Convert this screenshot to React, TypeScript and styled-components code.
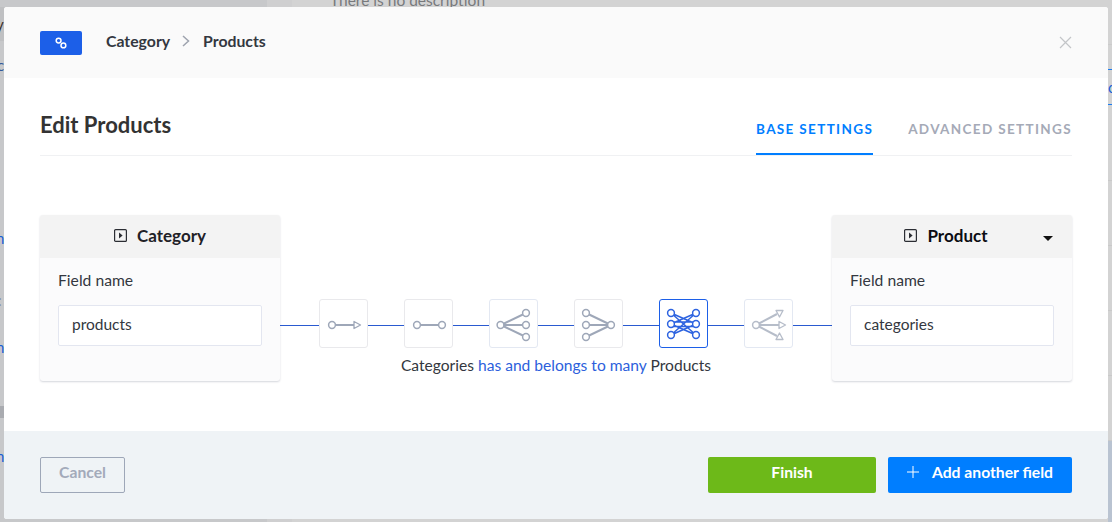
import React from "react";
import styled, { createGlobalStyle } from "styled-components";

const Global = createGlobalStyle`
  html, body { margin: 0; padding: 0; height: 100%; overflow: hidden; }
  body { font-family: Lato, "Noto Sans", sans-serif; color: #333740; }
  * { box-sizing: border-box; }
`;

const Page = styled.div`
  position: relative;
  width: 1112px;
  height: 522px;
  overflow: hidden;
  display: flex;
  background: #d3d3d3;
`;

const Sidebar = styled.div`
  width: 267px;
  flex: none;
  background: #c7c8ca;
  display: flex;
  flex-direction: column;
  overflow: hidden;
`;

const SideRow = styled.div<{ $h: number; $color?: string; $bg?: string; $indent?: number }>`
  height: ${(p) => p.$h}px;
  flex: none;
  font-size: 15px;
  line-height: ${(p) => p.$h}px;
  white-space: nowrap;
  color: ${(p) => p.$color || "#1b5fd6"};
  background: ${(p) => p.$bg || "transparent"};
  text-indent: ${(p) => p.$indent ?? -4}px;
`;

const Gutter = styled.div`
  width: 25px;
  flex: none;
  background: #cfcfd0;
`;

const Main = styled.div`
  flex: 1;
  padding-left: 38px;
  font-size: 15.5px;
  line-height: 18px;
  color: #77797c;
  margin-top: -9px;
`;

const Edge = styled.div`
  width: 4px;
  flex: none;
  display: flex;
  flex-direction: column;
  overflow: hidden;
`;

const EdgeRow = styled.div<{ $h: number; $border?: string; $bg?: string }>`
  height: ${(p) => p.$h}px;
  flex: none;
  border-bottom: 1px solid ${(p) => p.$border || "#c9c9c9"};
  background: ${(p) => p.$bg || "transparent"};
  color: #1b5fd6;
  font-size: 15px;
  line-height: ${(p) => p.$h}px;
  white-space: nowrap;
`;

const Modal = styled.div`
  position: absolute;
  left: 4px;
  top: 7px;
  width: 1104px;
  height: 512px;
  background: #fff;
  border-radius: 3px;
  overflow: hidden;
  display: flex;
  flex-direction: column;
`;

const Header = styled.header`
  height: 71px;
  flex: none;
  background: #fafafa;
  display: flex;
  align-items: center;
  padding: 0 36px;
`;

const Badge = styled.div`
  width: 42px;
  height: 24px;
  background: #1c5fe8;
  border-radius: 2px;
  display: flex;
  align-items: center;
  justify-content: center;
  margin-right: 24px;
`;

const Crumb = styled.span`
  font-size: 15.8px;
  font-weight: 700;
  color: #333740;
  padding-bottom: 5px;
`;

const CrumbArrow = styled.svg`
  width: 8px;
  height: 12px;
  margin: 0 13px 4px 12px;
`;

const CloseBtn = styled.button`
  margin-left: auto;
  width: 13px;
  height: 13px;
  padding: 0;
  border: 0;
  background: none;
  display: flex;
`;

const Body = styled.main`
  flex: 1;
  padding: 0 36px;
`;

const TitleRow = styled.div`
  height: 78px;
  display: flex;
  align-items: flex-end;
  border-bottom: 1px solid #f0f1f3;
`;

const Title = styled.h2`
  margin: 0 auto 0 0;
  align-self: flex-start;
  padding-top: 32px;
  font-size: 22px;
  line-height: 30px;
  font-weight: 700;
  color: #333333;
`;

const Tab = styled.div<{ $active?: boolean }>`
  height: 37px;
  margin-left: ${(p) => (p.$active ? "0" : "36px")};
  margin-right: ${(p) => (p.$active ? "-1px" : "0")};
  font-size: 13.5px;
  line-height: 22px;
  font-weight: 700;
  letter-spacing: 1.35px;
  color: ${(p) => (p.$active ? "#007eff" : "#a5aab7")};
  border-bottom: 2px solid ${(p) => (p.$active ? "#007eff" : "transparent")};
`;

const Relation = styled.div`
  display: flex;
  margin-top: 59px;
`;

const Card = styled.section`
  width: 240px;
  height: 166px;
  flex: none;
  background: #fbfbfc;
  border-radius: 3px;
  box-shadow: 0 1px 2px rgba(40, 50, 80, 0.2);
  overflow: hidden;
`;

const CardHead = styled.div<{ $caret?: boolean }>`
  position: relative;
  height: 43px;
  background: #f3f3f3;
  display: flex;
  align-items: center;
  justify-content: center;
  gap: 10px;
  font-size: 17px;
  font-weight: 700;
  color: ${(p) => (p.$caret ? "#0b0c12" : "#1f2127")};
  padding-right: ${(p) => (p.$caret ? "12px" : "0")};
  padding-bottom: 2px;
`;

const Caret = styled.svg`
  position: absolute;
  right: 19px;
  top: 21px;
  width: 10px;
  height: 5px;
`;

const CardBody = styled.div`
  padding: 11px 18px 0;
`;

const FieldLabel = styled.label`
  display: block;
  font-size: 15.7px;
  line-height: 22px;
  color: #333740;
  margin-bottom: 14px;
`;

const FieldInput = styled.input`
  display: block;
  width: 204px;
  height: 41px;
  border: 1px solid #e3e6f0;
  border-radius: 2px;
  background: #fff;
  padding: 0 13px 3px;
  font: 400 15.5px Lato, sans-serif;
  color: #333740;
  outline: none;
`;

const Center = styled.div`
  flex: 1;
  display: flex;
  flex-direction: column;
  padding-top: 84px;
`;

const Connectors = styled.div`
  display: flex;
  align-items: flex-start;
`;

const Wire = styled.div<{ $outer?: boolean }>`
  flex: ${(p) => (p.$outer ? "1" : "none")};
  width: ${(p) => (p.$outer ? "auto" : "36px")};
  height: 1px;
  margin-top: 26px;
  background: #2a5ad0;
`;

const NatureBtn = styled.div<{ $active?: boolean; $faded?: boolean }>`
  width: 49px;
  height: 49px;
  flex: none;
  border: 1px solid ${(p) => (p.$active ? "#1c5fe8" : p.$faded ? "#e3e8f2" : "#e9e9ec")};
  border-radius: 3px;
  background: #fff;
  display: flex;
`;

const Caption = styled.p`
  margin: 7px 0 0;
  text-align: center;
  font-size: 15.6px;
  line-height: 20px;
  color: #333740;
`;

const CaptionLink = styled.span`
  color: #2d5fdc;
`;

const Footer = styled.footer`
  height: 88px;
  flex: none;
  background: #eff3f6;
  padding: 26px 36px 0;
  display: flex;
  align-items: flex-start;
`;

const Button = styled.button<{ $w: number; $bg: string }>`
  width: ${(p) => p.$w}px;
  height: 36px;
  border: 0;
  border-radius: 2px;
  background: ${(p) => p.$bg};
  color: #fff;
  font: 700 15.7px Lato, sans-serif;
  display: flex;
  align-items: center;
  justify-content: center;
  gap: 13px;
  margin-left: 12px;
  padding: 0 0 6px;
`;

const CancelButton = styled.button`
  width: 85px;
  height: 36px;
  margin-right: auto;
  border: 1px solid #9ea7b8;
  border-radius: 2px;
  background: transparent;
  color: #a3aaba;
  font: 700 15.7px Lato, sans-serif;
  padding: 0 0 6px;
`;

const NatureSvg = styled.svg`
  width: 47px;
  height: 47px;
`;

const G = "#9ea7b8";

const Node = ({ x, y, c = G }: { x: number; y: number; c?: string }) => (
  <circle cx={x} cy={y} r="3.4" fill="#fff" stroke={c} strokeWidth="1.5" />
);

const Icon = ({ children, faded }: { children: React.ReactNode; faded?: boolean }) => (
  <NatureSvg viewBox="1 1 47 47" opacity={faded ? 0.75 : 1}>
    {children}
  </NatureSvg>
);

const Seg = ({ d, c = G, w = 2 }: { d: string; c?: string; w?: number }) => (
  <path d={d} stroke={c} strokeWidth={w} fill="none" />
);

const Head = ({ p, c = G }: { p: string; c?: string }) => (
  <polygon points={p} fill="#fff" stroke={c} strokeWidth="1.3" strokeLinejoin="round" />
);

const TableIcon = () => (
  <svg width="13" height="13" viewBox="0 0 13 13">
    <rect x="0.6" y="0.6" width="11.8" height="11.8" rx="1" fill="none" stroke="#2b2d33" strokeWidth="1.2" />
    <polygon points="5,3.6 8.6,6.5 5,9.4" fill="#2b2d33" />
  </svg>
);

const Blue = "#2d63e0";

export default function App() {
  return (
    <Page>
      <Global />
      <Sidebar>
        <SideRow $h={7} />
        <SideRow $h={34} $color="#3a2f2a" $bg="#bfc0c2">y</SideRow>
        <SideRow $h={49} $color="#345a9a" $indent={-3}>c</SideRow>
        <SideRow $h={130} />
        <SideRow $h={36}>n</SideRow>
        <SideRow $h={34} />
        <SideRow $h={20} $color="#8a93a8" $indent={-2}>:</SideRow>
        <SideRow $h={25} />
        <SideRow $h={24}>n</SideRow>
        <SideRow $h={47} />
        <SideRow $h={12} $bg="#a9abb0" />
        <SideRow $h={26} />
        <SideRow $h={24}>n</SideRow>
      </Sidebar>
      <Gutter />
      <Main>There is no description</Main>
      <Edge>
        <EdgeRow $h={45} $border="#cbcbcb" />
        <EdgeRow $h={25} $border="#1b7cf0" />
        <EdgeRow $h={35} $border="#1b7cf0">c</EdgeRow>
        <EdgeRow $h={76} />
        <EdgeRow $h={65} />
        <EdgeRow $h={65} />
        <EdgeRow $h={65} />
        <EdgeRow $h={65} />
        <EdgeRow $h={81} $border="transparent" $bg="#b9c3d1" />
      </Edge>
      <Modal>
        <Header>
          <Badge>
            <svg width="12" height="12" viewBox="0 0 12 12">
              <circle cx="3.6" cy="3.6" r="2.4" fill="none" stroke="#fff" strokeWidth="1.5" />
              <circle cx="8.4" cy="8.4" r="2.4" fill="none" stroke="#fff" strokeWidth="1.5" />
            </svg>
          </Badge>
          <Crumb>Category</Crumb>
          <CrumbArrow viewBox="0 0 8 12">
            <path d="M1 1l5.5 5L1 11" fill="none" stroke="#9ea3ae" strokeWidth="1.5" />
          </CrumbArrow>
          <Crumb>Products</Crumb>
          <CloseBtn aria-label="Close">
            <svg width="13" height="13" viewBox="0 0 13 13">
              <path d="M1 1l11 11M12 1L1 12" stroke="#c3c5c8" strokeWidth="1.2" fill="none" />
            </svg>
          </CloseBtn>
        </Header>
        <Body>
          <TitleRow>
            <Title>Edit Products</Title>
            <Tab $active>BASE SETTINGS</Tab>
            <Tab>ADVANCED SETTINGS</Tab>
          </TitleRow>
          <Relation>
            <Card>
              <CardHead>
                <TableIcon />
                Category
              </CardHead>
              <CardBody>
                <FieldLabel>Field name</FieldLabel>
                <FieldInput value="products" readOnly />
              </CardBody>
            </Card>
            <Center>
              <Connectors>
                <Wire $outer />
                <NatureBtn>
                  <Icon>
                    <Seg d="M15 26H35" />
                    <Head p="35,22.5 41.5,26 35,29.5" />
                    <Node x={13} y={26} />
                  </Icon>
                </NatureBtn>
                <Wire />
                <NatureBtn>
                  <Icon>
                    <Seg d="M13 26H38" />
                    <Node x={13} y={26} />
                    <Node x={38} y={26} />
                  </Icon>
                </NatureBtn>
                <Wire />
                <NatureBtn $faded>
                  <Icon>
                    <Seg d="M12 26L37 14M12 26H37M12 26L37 38" />
                    <Node x={11.5} y={26} />
                    <Node x={37} y={14} />
                    <Node x={37} y={26} />
                    <Node x={37} y={38} />
                  </Icon>
                </NatureBtn>
                <Wire />
                <NatureBtn>
                  <Icon>
                    <Seg d="M37 26L12 14M37 26H12M37 26L12 38" />
                    <Node x={37} y={26} />
                    <Node x={12} y={14} />
                    <Node x={12} y={26} />
                    <Node x={12} y={38} />
                  </Icon>
                </NatureBtn>
                <Wire />
                <NatureBtn $active>
                  <Icon>
                    <Seg
                      c={Blue}
                      w={1.5}
                      d="M12 14L37 36M12 36L37 14M12 14L37 25M12 25L37 14M12 25L37 36M12 36L37 25M14 23H35M14 27.5H35"
                    />
                    <Node x={12} y={14} c={Blue} />
                    <Node x={12} y={25} c={Blue} />
                    <Node x={12} y={36} c={Blue} />
                    <Node x={37} y={14} c={Blue} />
                    <Node x={37} y={25} c={Blue} />
                    <Node x={37} y={36} c={Blue} />
                  </Icon>
                </NatureBtn>
                <Wire />
                <NatureBtn $faded>
                  <Icon faded>
                    <Seg d="M12 26L33 15M12 26H36M12 26L33 37" />
                    <Node x={12} y={26} />
                    <Head p="32,11.5 39,11.5 35.5,18" />
                    <Head p="35,22.5 41.5,26 35,29.5" />
                    <Head p="32,40.5 39,40.5 35.5,34" />
                  </Icon>
                </NatureBtn>
                <Wire $outer />
              </Connectors>
              <Caption>
                Categories <CaptionLink>has and belongs to many</CaptionLink> Products
              </Caption>
            </Center>
            <Card>
              <CardHead $caret>
                <TableIcon />
                Product
                <Caret viewBox="0 0 10 5">
                  <polygon points="0,0 10,0 5,5" fill="#111" />
                </Caret>
              </CardHead>
              <CardBody>
                <FieldLabel>Field name</FieldLabel>
                <FieldInput value="categories" readOnly />
              </CardBody>
            </Card>
          </Relation>
        </Body>
        <Footer>
          <CancelButton>Cancel</CancelButton>
          <Button $w={168} $bg="#6db919">Finish</Button>
          <Button $w={184} $bg="#007eff">
            <svg width="12" height="12" viewBox="0 0 12 12">
              <path d="M6 0V12M0 6H12" stroke="#fff" strokeWidth="1" />
            </svg>
            Add another field
          </Button>
        </Footer>
      </Modal>
    </Page>
  );
}
